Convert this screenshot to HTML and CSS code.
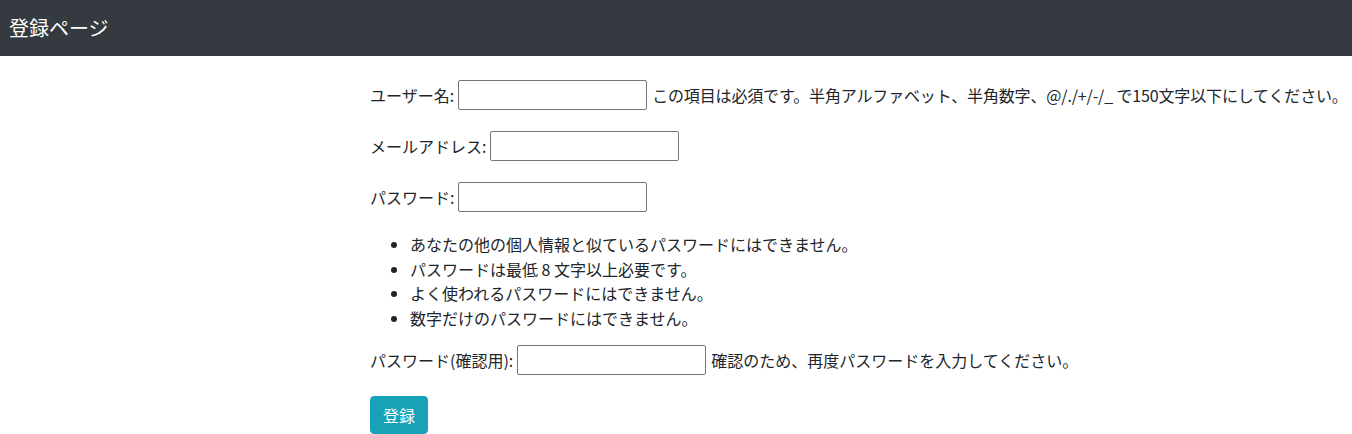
FILE: index.html
```html
<!DOCTYPE html>
<html lang="ja">
<head>
<meta charset="utf-8">
<title>登録ページ</title>
<link rel="stylesheet" href="styles.css">
</head>
<body>
<nav class="navbar"><span class="brand">登録ページ</span></nav>
<main class="main">
  <form class="form">
    <p class="row"><label class="label">ユーザー名:</label><input class="field" type="text"><span class="help help-long">この項目は必須です。半角アルファベット、半角数字、@/./+/-/_ で150文字以下にしてください。</span></p>
    <p class="row"><label class="label">メールアドレス:</label><input class="field" type="email"></p>
    <p class="row"><label class="label">パスワード:</label><input class="field" type="password"></p>
    <ul class="rules">
      <li>あなたの他の個人情報と似ているパスワードにはできません。</li>
      <li>パスワードは最低 8 文字以上必要です。</li>
      <li>よく使われるパスワードにはできません。</li>
      <li>数字だけのパスワードにはできません。</li>
    </ul>
    <p class="row"><label class="label">パスワード(確認用):</label><input class="field" type="password"><span class="help">確認のため、再度パスワードを入力してください。</span></p>
    <button class="btn" type="button">登録</button>
  </form>
</main>
</body>
</html>
```
FILE: styles.css
```css
html, body {
  margin: 0;
  padding: 0;
  background: #fff;
}
body {
  font-family: "Noto Sans CJK JP", "Noto Sans", sans-serif;
  font-size: 16px;
  line-height: 24px;
  color: #212529;
}
.navbar {
  height: 56px;
  background: #343a40;
  display: flex;
  align-items: center;
  padding-left: 9px;
}
.brand {
  color: #fff;
  font-size: 20px;
  line-height: 24px;
}
.main {
  padding: 21px 0 0 370px;
}
.form {
  display: flex;
  flex-direction: column;
  align-items: flex-start;
}
.row {
  display: flex;
  align-items: center;
  height: 35px;
  margin: 0 0 16px 0;
  white-space: nowrap;
}
.label {
  margin-right: 4px;
}
.field {
  width: 189px;
  height: 30px;
  box-sizing: border-box;
  border: 1px solid #767676;
  border-radius: 2px;
  padding: 1px 2px;
  margin: 0;
  font: inherit;
}
.help {
  margin-left: 5px;
}
.help-long {
  letter-spacing: -0.15px;
}
.rules {
  margin: 2px 0 12px 0;
  padding-left: 40px;
  line-height: 24.5px;
}
.btn {
  margin-top: 3px;
  background: #17a2b8;
  color: #fff;
  border: 1px solid #17a2b8;
  border-radius: 4px;
  padding: 6px 12px;
  font: inherit;
  line-height: 24px;
  cursor: pointer;
}
```
